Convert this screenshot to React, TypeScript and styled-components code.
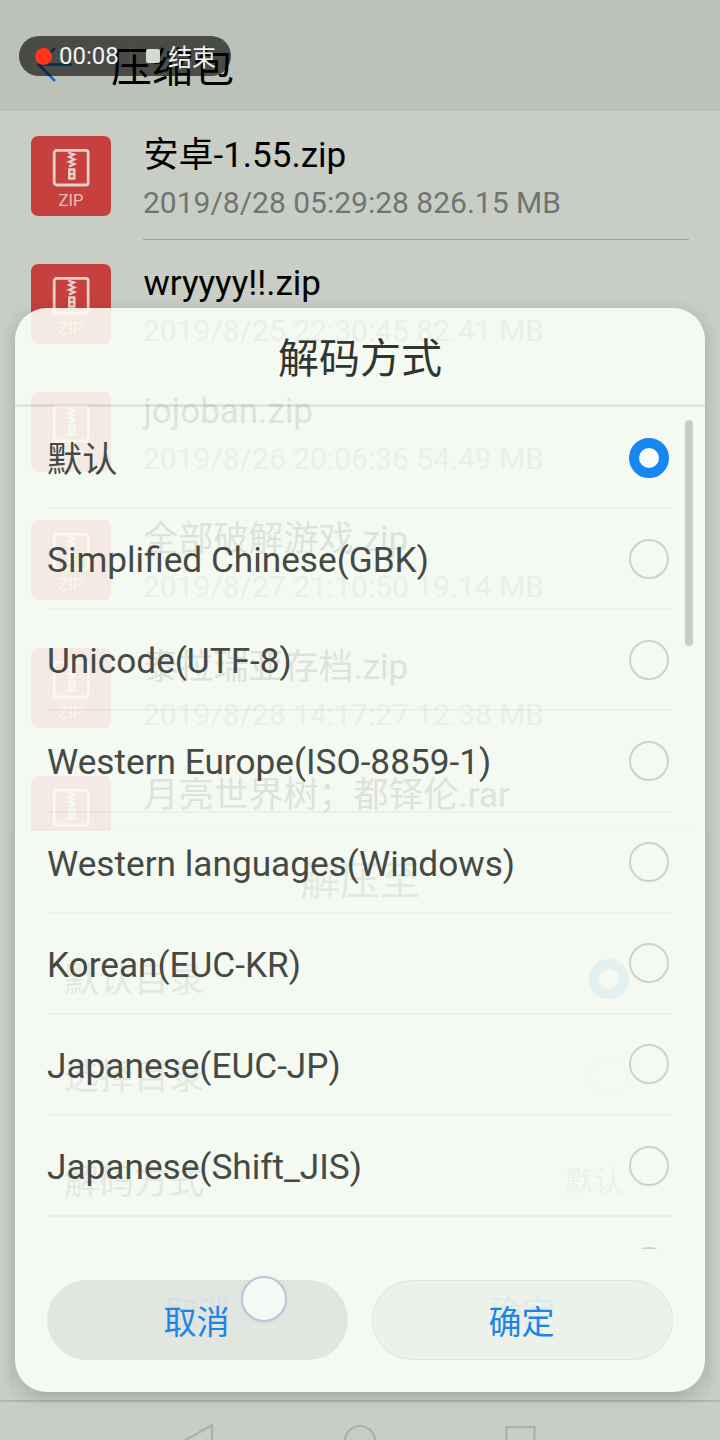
import React from "react";
import styled, { createGlobalStyle, css } from "styled-components";

const GlobalStyle = createGlobalStyle`
  *, *::before, *::after { box-sizing: border-box; }
  body {
    margin: 0;
    background: #c8cdc6;
    font-family: Roboto, "Noto Sans CJK SC", sans-serif;
  }
`;

const Screen = styled.main`
  position: relative;
  display: flex;
  flex-direction: column;
  width: 720px;
  height: 1440px;
  overflow: hidden;
  background: #c8cdc6;
  color: #000;
`;

const Header = styled.header`
  display: flex;
  align-items: flex-end;
  flex: none;
  height: 111px;
  padding: 0 0 21px 36px;
  background: #bcc1ba;
`;

const BackIcon = styled.svg`
  width: 40px;
  height: 40px;
  margin-right: 35px;
  margin-bottom: 5px;
`;

const PageTitle = styled.h1`
  margin: 0;
  font-size: 41px;
  font-weight: 400;
  line-height: 44px;
`;

const FileList = styled.section`
  flex: none;
  height: 720px;
  overflow: hidden;
`;

const FileRow = styled.article`
  display: flex;
  gap: 32px;
  height: 128.1px;
  padding: 25px 31px 0;
`;

const FileBadge = styled.div`
  display: flex;
  flex-direction: column;
  align-items: center;
  flex: none;
  width: 80px;
  height: 80px;
  padding-top: 12px;
  border-radius: 7px;
  background: #c6403e;
  color: #e2c0ba;
  font-size: 16.5px;
  line-height: 20px;

  svg { display: block; width: 38px; height: 39px; margin-bottom: 4px; }
`;

const FileInfo = styled.div<{ $line?: boolean }>`
  flex: 1;
  height: 104px;
  white-space: nowrap;
  border-bottom: 1px solid ${(p) => (p.$line ? "#a0a59f" : "transparent")};
`;

const FileName = styled.div`
  padding-left: 0.5px;
  font-size: 35px;
  line-height: 40px;
`;

const FileMeta = styled.div`
  margin-top: 7px;
  font-size: 30px;
  line-height: 40px;
  color: #70756f;
`;

const LowerSheet = styled.section`
  position: absolute;
  top: 831px;
  left: 15px;
  width: 690px;
  height: 561px;
  padding: 27px 49px 0;
  background: #c8cdc6;
  color: #343934;
  box-shadow: 0 4px 14px rgba(0, 0, 0, 0.06);
`;

const SheetTitle = styled.h2`
  margin: 0;
  text-align: center;
  font-size: 40px;
  font-weight: 400;
  line-height: 48px;
`;

const SheetRow = styled.div<{ $height: number }>`
  display: flex;
  align-items: center;
  justify-content: space-between;
  height: ${(p) => p.$height}px;
  padding-right: 27px;
  font-size: 35px;
`;

const SheetLabel = styled.span`
  padding-bottom: 5px;
`;

const SheetValue = styled.span`
  margin-right: 6px;
  padding-bottom: 4px;
  font-size: 29px;
  color: #7d827c;
`;

const SheetActions = styled.div`
  display: flex;
  justify-content: space-between;
  margin: 29px 101px 0;
  font-size: 33px;
  line-height: 44px;
  color: #5c9cc8;
`;

const NavBar = styled.footer`
  flex: none;
  height: 40px;
  margin-top: auto;
  border-top: 2px solid #b0b5ae;

  svg { display: block; width: 720px; height: 38px; }
`;

const Dialog = styled.section`
  position: absolute;
  top: 308px;
  left: 15px;
  display: flex;
  flex-direction: column;
  width: 690px;
  height: 1084px;
  border-radius: 32px;
  background: rgba(249, 254, 247, 0.89);
  box-shadow: 0 4px 16px rgba(0, 0, 0, 0.17);
`;

const DialogTitle = styled.h2`
  flex: none;
  height: 99px;
  margin: 0;
  border-bottom: 3px solid rgba(0, 0, 0, 0.08);
  text-align: center;
  color: #303530;
  font-size: 41px;
  font-weight: 400;
  line-height: 102px;
`;

const OptionScroller = styled.div`
  display: flex;
  justify-content: space-between;
  height: 842px;
  padding: 0 12px 0 32px;
  overflow: hidden;
`;

const Options = styled.div`
  width: 625px;
  padding-top: 1px;
`;

const Option = styled.label`
  display: flex;
  align-items: center;
  justify-content: space-between;
  height: 101.15px;
  padding-right: 3px;
  border-bottom: 2px solid rgba(0, 0, 0, 0.032);
  color: #454a44;
  font-size: 35.2px;
  white-space: nowrap;
`;

const OptionName = styled.span<{ $cjk?: boolean }>`
  padding: ${(p) => (p.$cjk ? "0 0 2px" : "3px 0 0")};
`;

const Radio = styled.span<{ $checked?: boolean; $tone?: string }>`
  flex: none;
  width: 40px;
  height: 40px;
  border-radius: 50%;
  border: 2px solid ${(p) => p.$tone ?? "#cdd2cb"};
  ${(p) =>
    p.$checked &&
    css`
      border: 10px solid ${p.$tone ?? "#1787f3"};
      background: ${p.$tone ? "transparent" : "#f8fdf7"};
    `}
`;

const ScrollThumb = styled.div`
  width: 8px;
  height: 226px;
  margin-top: 13px;
  border-radius: 4px;
  background: #c8cdc7;
`;

const Actions = styled.div`
  display: flex;
  gap: 24px;
  padding: 31px 32px 0;
`;

const ActionButton = styled.button<{ $pressed?: boolean }>`
  width: 301px;
  height: 80px;
  padding: 0 2px 0 0;
  border: 1px solid ${(p) => (p.$pressed ? "rgba(0,0,0,.015)" : "rgba(0,0,0,.055)")};
  border-radius: 40px;
  background: ${(p) => (p.$pressed ? "rgba(0,0,0,.075)" : "rgba(0,0,0,.032)")};
  color: #1d86e4;
  font: inherit;
  font-size: 33px;
`;

const TouchDot = styled.div`
  position: absolute;
  top: 1276px;
  left: 241px;
  width: 46px;
  height: 46px;
  border: 2px solid #bcc5d8;
  border-radius: 50%;
  background: rgba(246, 250, 247, 0.93);
  box-shadow: 0 0 3px rgba(130, 145, 180, 0.25);
`;

const Recorder = styled.div`
  position: absolute;
  top: 36px;
  left: 19px;
  display: flex;
  align-items: center;
  width: 212px;
  height: 40px;
  padding-left: 16px;
  border-radius: 20px;
  background: rgba(0, 0, 0, 0.61);
  color: #f3f5f2;
  font-size: 24px;
  line-height: 40px;
`;

const RecordDot = styled.span`
  width: 17px;
  height: 17px;
  margin-right: 7px;
  border-radius: 50%;
  background: #ff351b;
`;

const Elapsed = styled.span`
  width: 71px;
`;

const PillDivider = styled.span`
  width: 1px;
  height: 20px;
  margin-right: 15px;
  background: rgba(255, 255, 255, 0.1);
`;

const StopSquare = styled.span`
  width: 14px;
  height: 14px;
  margin-right: 8px;
  border-radius: 2px;
  background: #d6dad5;
`;

const StopLabel = styled.span`
  padding-top: 3px;
`;

function ArchiveIcon() {
  return (
    <svg viewBox="0 0 38 39" fill="none" stroke="#e6d0c9">
      <rect x="2.200" y="2.400" width="34" height="34.600" rx="2.500" strokeWidth="2.800" />
      <path d="M16 4.500 22 6.500 17 9 22.500 11.500 17 14 22.500 16 17 18.500" strokeWidth="2.200" />
      <path d="M17.300 21.500h5v9h-5zM17.500 26h4.500" strokeWidth="2.500" />
    </svg>
  );
}

const files = [
  { name: "安卓-1.55.zip", meta: "2019/8/28 05:29:28 826.15 MB" },
  { name: "wryyyy!!.zip", meta: "2019/8/25 22:30:45 82.41 MB" },
  { name: "jojoban.zip", meta: "2019/8/26 20:06:36 54.49 MB" },
  { name: "全部破解游戏.zip", meta: "2019/8/27 21:10:50 19.14 MB" },
  { name: "泰拉瑞亚存档.zip", meta: "2019/8/28 14:17:27 12.38 MB" },
  { name: "月亮世界树；都铎伦.rar", meta: "" },
];

const encodings = [
  "默认",
  "Simplified Chinese(GBK)",
  "Unicode(UTF-8)",
  "Western Europe(ISO-8859-1)",
  "Western languages(Windows)",
  "Korean(EUC-KR)",
  "Japanese(EUC-JP)",
  "Japanese(Shift_JIS)",
  "",
];

export default function App() {
  return (
    <>
      <GlobalStyle />
      <Screen>
        <Header>
          <BackIcon viewBox="0 0 40 40" fill="none" stroke="#0d70cb" strokeWidth="2.6">
            <path d="M19 3 2.500 19.500 19 36M2.500 19.500H36" />
          </BackIcon>
          <PageTitle>压缩包</PageTitle>
        </Header>

        <FileList>
          {files.map((file, i) => (
            <FileRow key={file.name}>
              <FileBadge>
                <ArchiveIcon />
                {i < 5 && "ZIP"}
              </FileBadge>
              <FileInfo $line={i === 0}>
                <FileName>{file.name}</FileName>
                <FileMeta>{file.meta}</FileMeta>
              </FileInfo>
            </FileRow>
          ))}
        </FileList>

        <NavBar>
          <svg viewBox="0 0 720 38" fill="none" stroke="#abb0aa" strokeWidth="2.2">
            <path d="M212 23v30L183 39.500z" />
            <circle cx="360" cy="39" r="15" />
            <rect x="506.500" y="25" width="28" height="28" />
          </svg>
        </NavBar>

        <LowerSheet>
          <SheetTitle>解压至</SheetTitle>
          <SheetRow $height={146}>
            <SheetLabel>默认目录</SheetLabel>
            <Radio $checked $tone="#2d80b8" />
          </SheetRow>
          <SheetRow $height={48}>
            <SheetLabel>选择目录</SheetLabel>
            <Radio $tone="#b4b9b2" />
          </SheetRow>
          <SheetRow $height={162}>
            <SheetLabel>解码方式</SheetLabel>
            <SheetValue>默认</SheetValue>
          </SheetRow>
          <SheetActions>
            <span>取消</span>
            <span>确定</span>
          </SheetActions>
        </LowerSheet>

        <Dialog>
          <DialogTitle>解码方式</DialogTitle>
          <OptionScroller>
            <Options>
              {encodings.map((name, i) => (
                <Option key={i}>
                  <OptionName $cjk={i === 0}>{name}</OptionName>
                  <Radio $checked={i === 0} />
                </Option>
              ))}
            </Options>
            <ScrollThumb />
          </OptionScroller>
          <Actions>
            <ActionButton $pressed>取消</ActionButton>
            <ActionButton>确定</ActionButton>
          </Actions>
        </Dialog>

        <TouchDot />
        <Recorder>
          <RecordDot />
          <Elapsed>00:08</Elapsed>
          <PillDivider />
          <StopSquare />
          <StopLabel>结束</StopLabel>
        </Recorder>
      </Screen>
    </>
  );
}
